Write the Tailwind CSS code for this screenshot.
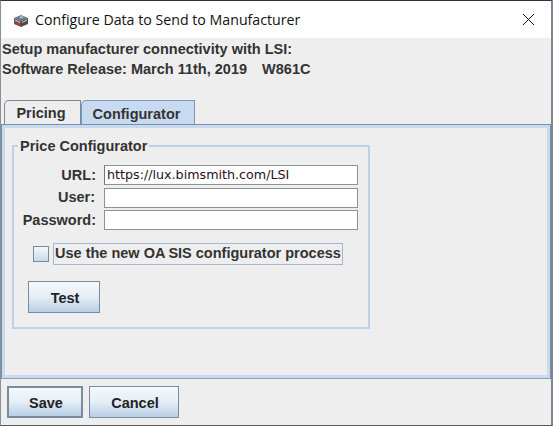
<!DOCTYPE html>
<html lang="en">
<head>
  <meta charset="UTF-8">
  <title>Configure Data to Send to Manufacturer</title>
  <script src="https://cdn.jsdelivr.net/npm/@tailwindcss/browser@4"></script>
</head>
<body class="w-[553px] h-[426px] overflow-hidden bg-[#eeeeee] font-['Liberation_Sans',sans-serif] text-[#333333]">
  <div class="h-full flex flex-col border-t border-t-[#2b3340] border-l border-l-[#8a8f98] border-r-2 border-r-[#7d8692] border-b border-b-[#55585e]">
    <!-- title bar -->
    <div class="h-[37px] shrink-0 bg-white flex items-center pl-[12px] pr-[16px]">
      <svg class="w-[16px] h-[16px] shrink-0" viewBox="0 0 16 16">
        <path d="M1 6 L8 3 L15 6 L8 9 Z" fill="#5f7f96"/>
        <path d="M1 6 L8 9 L8 15 L1 12 Z" fill="#8a4a42"/>
        <path d="M8 9 L15 6 L15 12 L8 15 Z" fill="#4f4b48"/>
        <path d="M2 8 L7 10.5 M9 10.5 L14 8" stroke="#d8d4cc" stroke-width="1"/>
        <path d="M6 5 L9 4 L11 5.5 L8 6.5 Z" fill="#b8c4cc"/>
      </svg>
      <span class="ml-[6px] text-[14.2px] text-[#111111] font-['Open_Sans',sans-serif] whitespace-nowrap">Configure Data to Send to Manufacturer</span>
      <svg class="ml-auto w-[13px] h-[13px]" viewBox="0 0 13 13"><path d="M1 1 L12 12 M12 1 L1 12" stroke="#111111" stroke-width="1"/></svg>
    </div>

    <div class="pl-[1px] pt-[1px] font-bold text-[14.5px] leading-[20px]">
      <p>Setup manufacturer connectivity with LSI:</p>
      <p class="whitespace-pre">Software Release: March 11th, 2019   <span class="ml-[3px]">W861C</span></p>
    </div>

    <!-- tabs -->
    <div class="flex pl-[3px] mt-[21px] h-[24px] items-end">
      <div class="w-[77px] h-[24px] pt-[3px] pr-[3px] bg-[#eeeeee] border border-b-0 border-[#7a8a99] rounded-tl-[5px] flex items-center justify-center font-bold text-[14.5px]">Pricing</div>
      <div class="w-[114px] h-[25px] pt-[3px] pr-[3px] -mb-[1px] bg-[#c8daf0] border border-b-0 border-[#7a97bd] rounded-tl-[5px] flex items-center justify-center font-bold text-[14.5px]">Configurator</div>
    </div>

    <!-- tab pane -->
    <div class="h-[255px] border border-[#7b8ea8] border-b-[#8a9cb4]">
      <div class="h-full border-[3px] border-[#c8daf0] bg-[#eeeeee] pl-[7px] pt-[10px]">
        <fieldset class="w-[358px] h-[191px] border-2 border-[#bdd2e8] pl-[7px]">
          <legend class="-ml-[3px] px-[2px] font-bold text-[14.5px] leading-[16px]">Price Configurator</legend>
          <div class="mt-[11px] flex flex-col gap-[2.5px]">
            <div class="flex items-center h-[20px]">
              <label class="w-[75px] pt-[1px] text-right font-bold text-[14.5px]">URL:</label>
              <div class="ml-[8px] w-[254px] h-[20px] bg-white border border-[#8a929c] border-l-[#6f7882] pl-[2px] flex items-center text-[12.7px] text-[#2a1020] font-['DejaVu_Sans',sans-serif] whitespace-nowrap">https://lux.bimsmith.com/LSI</div>
            </div>
            <div class="flex items-center h-[20px]">
              <label class="w-[74px] pt-[1px] text-right font-bold text-[14.5px]">User:</label>
              <div class="ml-[9px] w-[254px] h-[20px] bg-white border border-[#8a929c]"></div>
            </div>
            <div class="flex items-center h-[20px]">
              <label class="w-[75px] pt-[1px] text-right font-bold text-[14.5px]">Password:</label>
              <div class="ml-[8px] w-[254px] h-[20px] bg-white border border-[#8a929c]"></div>
            </div>
          </div>
          <div class="mt-[13px] ml-[12px] flex items-center h-[22px]">
            <div class="w-[16px] h-[16px] border border-[#7a8a9c] bg-gradient-to-b from-[#f4f8fc] to-[#c8d9ea]"></div>
            <div class="ml-[4px] h-[22px] w-[290px] border border-[#a3b8d0] flex items-center pl-[1px] font-bold text-[14.5px] whitespace-nowrap">Use the new O<span class="mr-[3px]">A</span>SIS configurator process</div>
          </div>
          <button class="mt-[16px] ml-[7px] block w-[72px] h-[32px] pt-[3px] pl-[2px] border border-[#7a8ba0] bg-gradient-to-b from-[#f6f9fc] via-[#e4edf6] to-[#b9cfe4] font-bold text-[14.5px] text-[#222222]">Test</button>
        </fieldset>
      </div>
    </div>

    <!-- bottom buttons -->
    <div class="flex gap-[6px] pl-[6px] pt-[7px]">
      <button class="w-[76px] h-[32px] pt-[3px] pl-[2px] border-2 border-[#7a8ba0] bg-gradient-to-b from-[#f6f9fc] via-[#e4edf6] to-[#b9cfe4] font-bold text-[14.5px] text-[#222222]">Save</button>
      <button class="w-[90px] h-[32px] pt-[3px] pl-[2px] border border-[#7a8ba0] bg-gradient-to-b from-[#f6f9fc] via-[#e4edf6] to-[#b9cfe4] font-bold text-[14.5px] text-[#222222]">Cancel</button>
    </div>
  </div>
</body>
</html>
